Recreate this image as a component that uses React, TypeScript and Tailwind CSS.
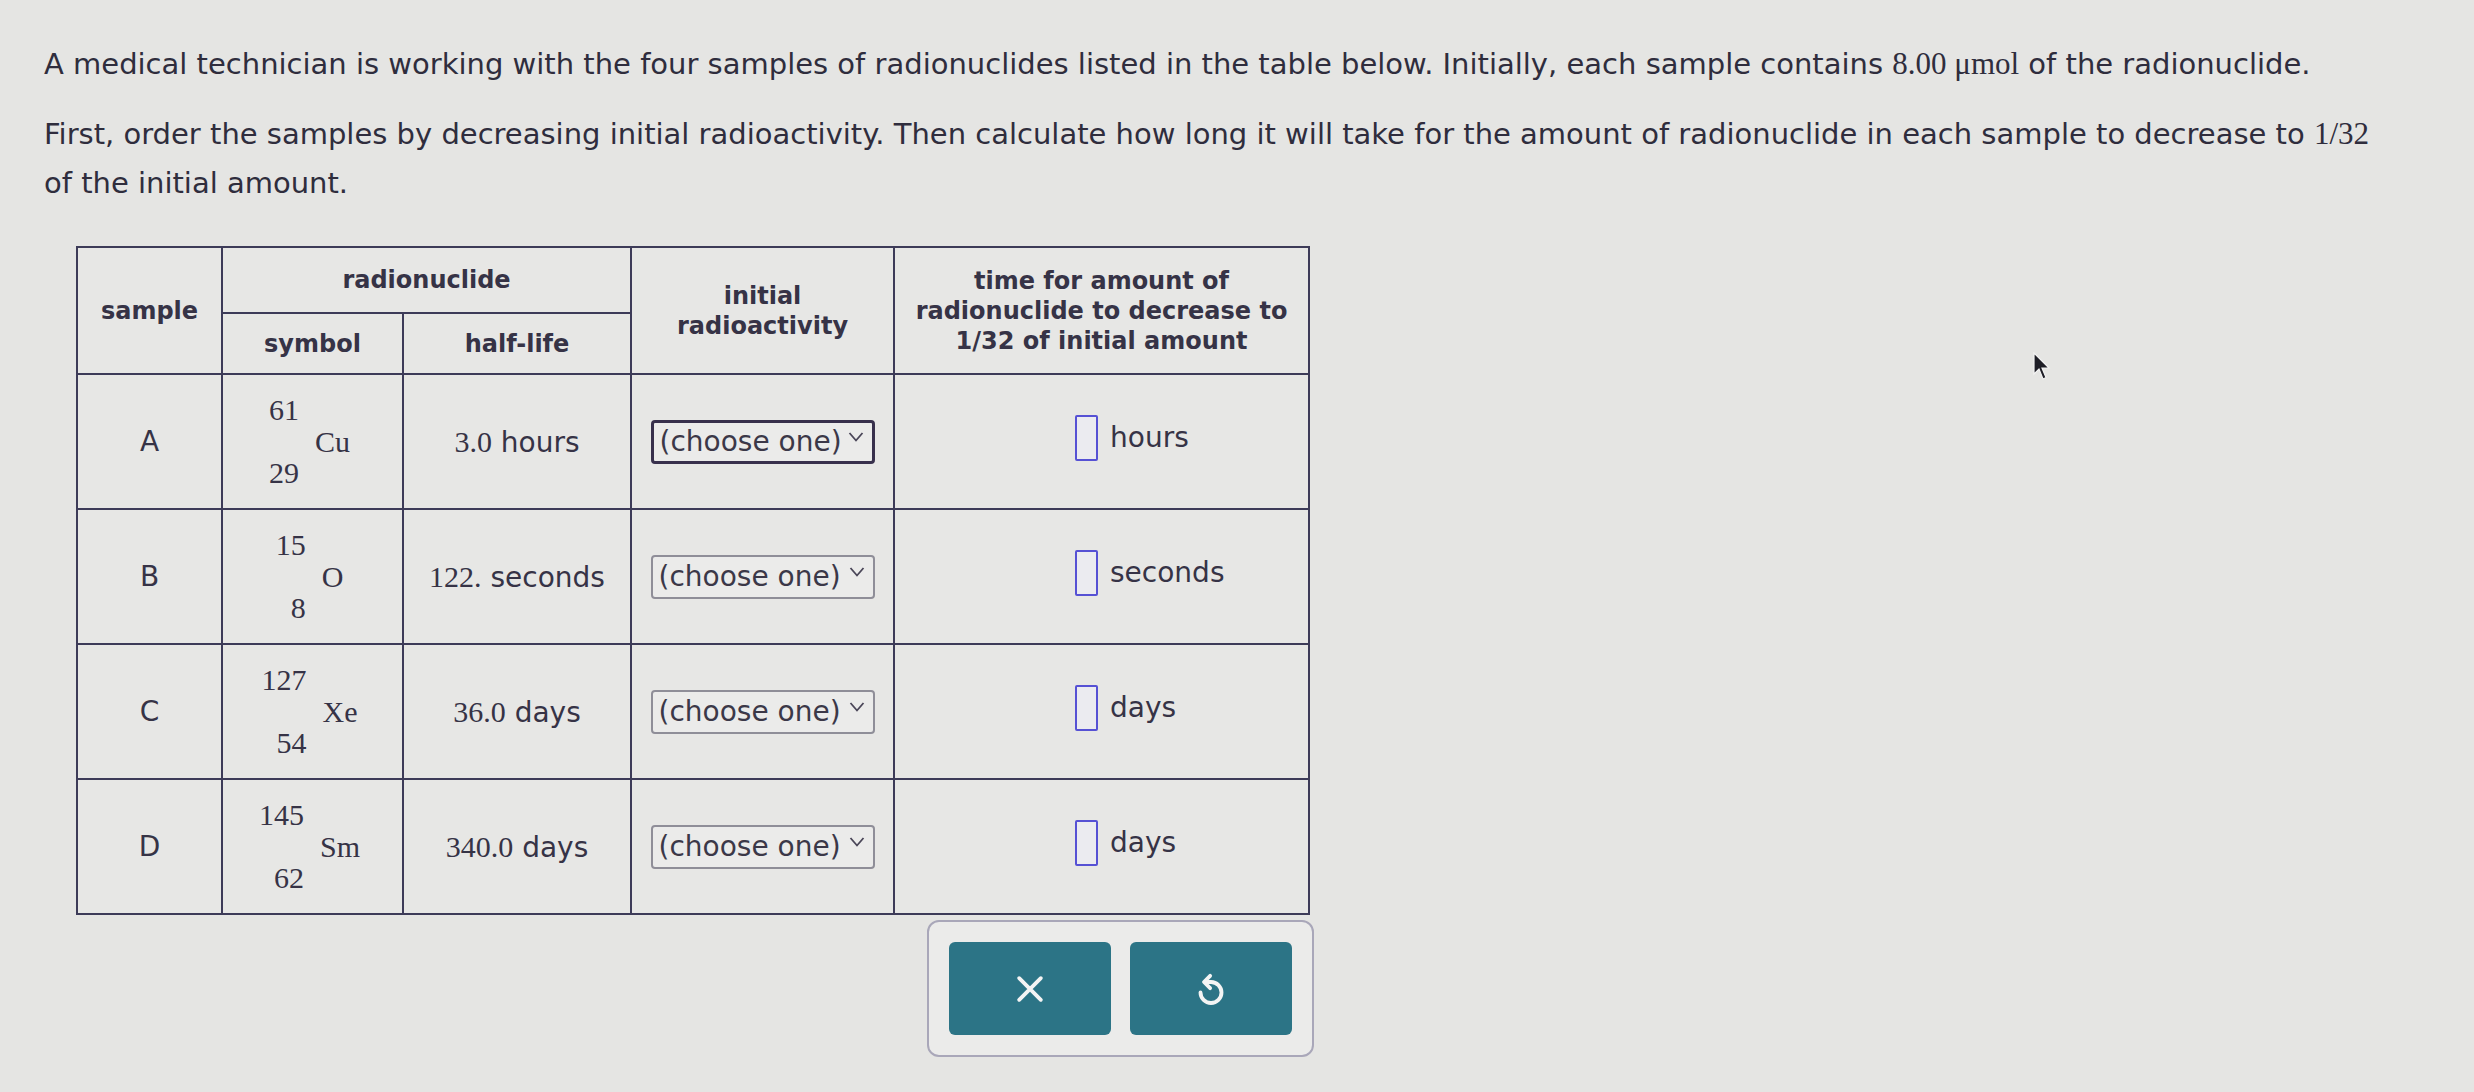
import React from 'react';

type Row = {
  sample: string;
  mass: string;
  atomic: string;
  el: string;
  num: string;
  unit: string;
  answerUnit: string;
  focused?: boolean;
};

const rows: Row[] = [
  { sample: 'A', mass: '61', atomic: '29', el: 'Cu', num: '3.0', unit: 'hours', answerUnit: 'hours', focused: true },
  { sample: 'B', mass: '15', atomic: '8', el: 'O', num: '122.', unit: 'seconds', answerUnit: 'seconds' },
  { sample: 'C', mass: '127', atomic: '54', el: 'Xe', num: '36.0', unit: 'days', answerUnit: 'days' },
  { sample: 'D', mass: '145', atomic: '62', el: 'Sm', num: '340.0', unit: 'days', answerUnit: 'days' },
];

const sans = "font-['DejaVu_Sans',Verdana,sans-serif]";
const serif = "font-['Liberation_Serif','Times_New_Roman',serif]";

const ChooseOne: React.FC<{ focused?: boolean }> = ({ focused }) => (
  <div
    className={`mx-auto flex h-[44px] w-[224px] items-center justify-between rounded-[4px] bg-[#ebebea] pl-[6px] pr-[8px] text-[28px] text-[#3b3848] ${
      focused ? 'border-[3px] border-[#38304c]' : 'border-2 border-[#8f8e98]'
    }`}
  >
    <span className="leading-none">(choose one)</span>
    <svg width="16" height="12" viewBox="0 0 16 12" className="mt-[-10px]">
      <path d="M1.5 2 L8 9.5 L14.5 2" fill="none" stroke="#4a4658" strokeWidth="1.8" />
    </svg>
  </div>
);

const App: React.FC = () => {
  return (
    <div className={`relative min-h-[1092px] w-full bg-[#e5e5e3] pl-[44px] pt-[39px] text-[#2f2d3d] ${sans}`}>
      <p className="text-[29px] leading-[49px]">
        A medical technician is working with the four samples of radionuclides listed in the table below. Initially, each
        sample contains <span className={`${serif} text-[31px]`}>8.00 μmol</span> of the radionuclide.
      </p>
      <p className="mt-[20px] w-[2350px] text-[29px] leading-[49px]">
        First, order the samples by decreasing initial radioactivity. Then calculate how long it will take for the amount of
        radionuclide in each sample to decrease to <span className={`${serif} text-[31px]`}>1/32</span> of the initial amount.
      </p>

      <div className="ml-[32px] mt-[38px] w-[1232px]">
        <table className="w-[1232px] table-fixed border-collapse border-2 border-[#3d3b58] bg-[#e7e7e5] text-[#363346]">
          <colgroup>
            <col className="w-[145px]" />
            <col className="w-[181px]" />
            <col className="w-[228px]" />
            <col className="w-[263px]" />
            <col className="w-[415px]" />
          </colgroup>
          <thead>
            <tr className="h-[66px] text-[24px] font-bold leading-[30px]">
              <th rowSpan={2} className="border-2 border-[#3d3b58] text-center">sample</th>
              <th colSpan={2} className="border-2 border-[#3d3b58] text-center">radionuclide</th>
              <th rowSpan={2} className="border-2 border-[#3d3b58] text-center">
                initial
                <br />
                radioactivity
              </th>
              <th rowSpan={2} className="border-2 border-[#3d3b58] text-center">
                time for amount of
                <br />
                radionuclide to decrease to
                <br />
                1/32 of initial amount
              </th>
            </tr>
            <tr className="h-[61px] text-[24px] font-bold">
              <th className="border-2 border-[#3d3b58] text-center">symbol</th>
              <th className="border-2 border-[#3d3b58] text-center">half-life</th>
            </tr>
          </thead>
          <tbody>
            {rows.map((r) => (
              <tr key={r.sample} className="h-[135px] text-[28px]">
                <td className="border-2 border-[#3d3b58] text-center">{r.sample}</td>
                <td className="border-2 border-[#3d3b58]">
                  <div className={`flex items-center justify-center pr-[6px] text-[30px] ${serif}`}>
                    <div className="flex flex-col items-end gap-[31px] leading-[32px]">
                      <span>{r.mass}</span>
                      <span>{r.atomic}</span>
                    </div>
                    <span className="ml-[16px] leading-[32px]">{r.el}</span>
                  </div>
                </td>
                <td className="border-2 border-[#3d3b58] text-center">
                  <span className={`${serif} text-[30px]`}>{r.num}</span> {r.unit}
                </td>
                <td className="border-2 border-[#3d3b58]">
                  <ChooseOne focused={r.focused} />
                </td>
                <td className="border-2 border-[#3d3b58]">
                  <div className="mt-[-8px] flex items-center pl-[180px]">
                    <div className="h-[46px] w-[23px] rounded-[2px] border-2 border-[#5651d4] bg-[#ebebf0]" />
                    <span className="ml-[12px]">{r.answerUnit}</span>
                  </div>
                </td>
              </tr>
            ))}
          </tbody>
        </table>

        <div className="flex justify-end">
          <div className="mr-[-6px] mt-[5px] flex gap-[19px] rounded-[12px] border-2 border-[#a9a7b9] bg-[#ebebea] px-[20px] pb-[20px] pt-[20px]">
            <button className="flex h-[93px] w-[162px] items-center justify-center rounded-[6px] bg-[#2c7486]">
              <svg width="40" height="40" viewBox="0 0 24 24" fill="none" stroke="#f4f4f4" strokeWidth="2.3" strokeLinecap="round">
                <path d="M5.5 5.5 L18.5 18.5 M18.5 5.5 L5.5 18.5" />
              </svg>
            </button>
            <button className="flex h-[93px] w-[162px] items-center justify-center rounded-[6px] bg-[#2c7486]">
              <svg width="42" height="42" viewBox="0 0 24 24" fill="none" stroke="#f4f4f4" strokeWidth="2.2" strokeLinecap="round" strokeLinejoin="round">
                <path d="M9 8 H12 A6 6 0 1 1 6 14" />
                <path d="M11.5 4.5 L8 8 L11.5 11.5" />
              </svg>
            </button>
          </div>
        </div>
      </div>

      {/* mouse pointer */}
      <svg className="absolute left-[2033px] top-[352px]" width="20" height="30" viewBox="0 0 20 30">
        <path d="M1 1 L1 22 L6 17 L10 27 L13 25.5 L9 16 L16 16 Z" fill="#1e1e26" stroke="#f2f2f2" strokeWidth="1.2" />
      </svg>
    </div>
  );
};

export default App;
